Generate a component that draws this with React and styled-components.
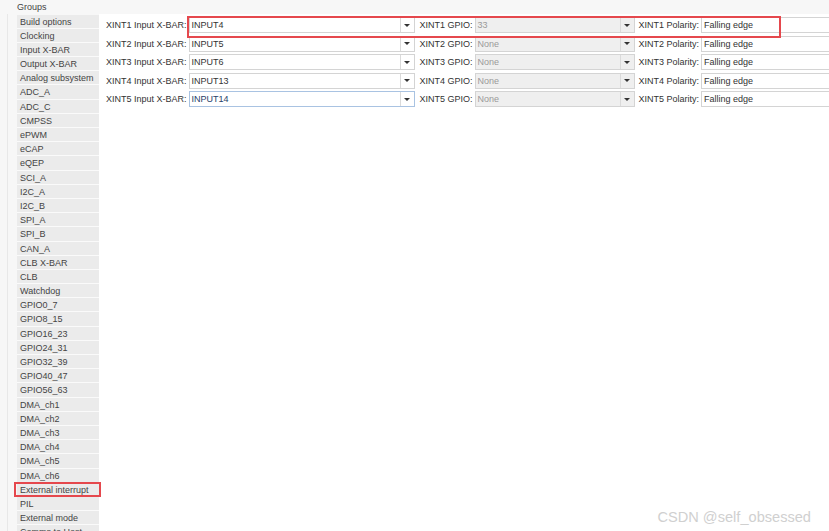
import React from 'react';
import styled, { createGlobalStyle } from 'styled-components';

const GlobalStyle = createGlobalStyle`
  html, body {
    margin: 0;
    padding: 0;
    background: #f7f7f7;
  }
  * {
    box-sizing: border-box;
  }
`;

const groups = [
  'Build options', 'Clocking', 'Input X-BAR', 'Output X-BAR', 'Analog subsystem',
  'ADC_A', 'ADC_C', 'CMPSS', 'ePWM', 'eCAP', 'eQEP', 'SCI_A', 'I2C_A', 'I2C_B',
  'SPI_A', 'SPI_B', 'CAN_A', 'CLB X-BAR', 'CLB', 'Watchdog', 'GPIO0_7', 'GPIO8_15',
  'GPIO16_23', 'GPIO24_31', 'GPIO32_39', 'GPIO40_47', 'GPIO56_63', 'DMA_ch1',
  'DMA_ch2', 'DMA_ch3', 'DMA_ch4', 'DMA_ch5', 'DMA_ch6', 'External interrupt',
  'PIL', 'External mode', 'Comms to Host',
];

const interrupts = [
  { n: 1, xbar: 'INPUT4', gpio: '33' },
  { n: 2, xbar: 'INPUT5', gpio: 'None' },
  { n: 3, xbar: 'INPUT6', gpio: 'None' },
  { n: 4, xbar: 'INPUT13', gpio: 'None' },
  { n: 5, xbar: 'INPUT14', gpio: 'None', focused: true },
];

const Window = styled.div`
  position: relative;
  width: 829px;
  height: 531px;
  overflow: hidden;
  background: #f7f7f7;
  font-family: "Liberation Sans", Arial, sans-serif;
  font-size: 9px;
  color: #333;
`;

const Caption = styled.div`
  height: 14px;
  padding-left: 17px;
  line-height: 15px;
  color: #444;
`;

const Body = styled.div`
  display: flex;
  height: 517px;
  margin-left: 7px;
  border-left: 1px solid #e8e8e8;
  padding-left: 9px;
`;

const GroupList = styled.div`
  width: 82px;
  flex-shrink: 0;
  display: flex;
  flex-direction: column;
  padding-top: 0.5px;
`;

const GroupItem = styled.div`
  position: relative;
  height: 14.2px;
  flex-shrink: 0;
  padding-left: 3px;
  line-height: 14px;
  white-space: nowrap;
  color: #444;
  background: #ebebeb;
  border-bottom: 1px solid #fafafa;

  ${p => p.$marked && `
    &::after {
      content: '';
      position: absolute;
      left: -3px;
      right: -2px;
      top: -1px;
      bottom: -1px;
      border: 2px solid #e5484d;
    }
  `}
`;

const Panel = styled.div`
  flex: 1;
  background: #fff;
  padding: 3px 0 0 7px;
`;

const Form = styled.div`
  display: grid;
  grid-template-columns: auto 228px auto 162px auto 150px;
  column-gap: 2px;
  row-gap: 2.5px;
  align-items: center;
`;

const Label = styled.span`
  white-space: nowrap;
  color: #333;
  padding-left: ${p => p.$indent || 0}px;
`;

const Combo = styled.div`
  display: flex;
  height: 16px;
  border: 1px solid ${p => (p.$focused ? '#a9c3e2' : '#d4d4d4')};
  background: ${p => (p.$disabled ? '#efefef' : '#fff')};
  color: ${p => (p.$disabled ? '#9a9a9a' : p.$focused ? '#27406a' : '#333')};
  margin-right: 2px;
`;

const ComboText = styled.span`
  flex: 1;
  padding-left: 2px;
  line-height: 14px;
`;

const ComboButton = styled.span`
  width: 14px;
  display: flex;
  align-items: center;
  justify-content: center;
  border-left: 1px solid #dadada;
`;

const Arrow = styled.span`
  width: 0;
  height: 0;
  border-left: 3px solid transparent;
  border-right: 3px solid transparent;
  border-top: 3px solid #333;
`;

const TextInput = styled.div`
  height: 16px;
  border: 1px solid #d4d4d4;
  border-right: none;
  background: #fff;
  padding-left: 2px;
  line-height: 14px;
  color: #333;
`;

const Annotation = styled.div`
  position: absolute;
  left: 187px;
  top: 16px;
  width: 594px;
  height: 22px;
  border: 2px solid #e5484d;
  pointer-events: none;
`;

const Watermark = styled.div`
  position: absolute;
  right: 18px;
  bottom: 6px;
  font-family: "Liberation Sans", Arial, sans-serif;
  font-size: 14.6px;
  color: #d0d0d0;
`;

const Dropdown = ({ value, disabled, focused }) => (
  <Combo $disabled={disabled} $focused={focused}>
    <ComboText>{value}</ComboText>
    <ComboButton>
      <Arrow />
    </ComboButton>
  </Combo>
);

export default function App() {
  return (
    <Window>
      <GlobalStyle />
      <Caption>Groups</Caption>
      <Body>
        <GroupList>
          {groups.map(g => (
            <GroupItem key={g} $marked={g === 'External interrupt'}>{g}</GroupItem>
          ))}
        </GroupList>
        <Panel>
          <Form>
            {interrupts.map(it => (
              <React.Fragment key={it.n}>
                <Label>{`XINT${it.n} Input X-BAR:`}</Label>
                <Dropdown value={it.xbar} focused={it.focused} />
                <Label $indent={1}>{`XINT${it.n} GPIO:`}</Label>
                <Dropdown value={it.gpio} disabled />
                <Label>{`XINT${it.n} Polarity:`}</Label>
                <TextInput>Falling edge</TextInput>
              </React.Fragment>
            ))}
          </Form>
        </Panel>
      </Body>
      <Annotation />
      <Watermark>CSDN @self_obsessed</Watermark>
    </Window>
  );
}
